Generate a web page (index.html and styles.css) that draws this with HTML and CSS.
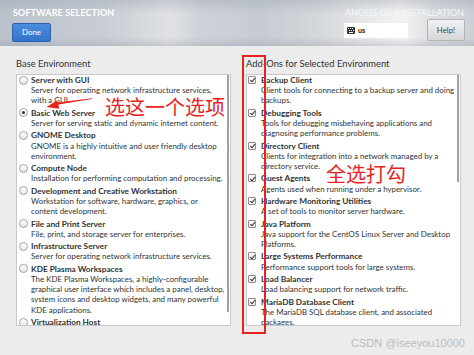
FILE: index.html
```html
<!DOCTYPE html>
<html lang="zh-CN">
<head>
    <meta charset="UTF-8">
    <title>Software Selection</title>
    <link rel="stylesheet" href="styles.css">
</head>
<body>
<div class="screen">
    <header class="topbar">
        <div class="topbar__left">
            <div class="topbar__title">SOFTWARE SELECTION</div>
            <button class="btnDone">Done</button>
        </div>
        <div class="topbar__right">
            <div class="topbar__product">ANOLIS OS 8 INSTALLATION</div>
            <div class="topbar__controls">
                <div class="kbd">
                    <svg class="kbd__icon" width="8" height="7" viewBox="0 0 8 7"><rect width="8" height="7" rx="1" fill="#2e3436"/><g fill="#fff"><rect x="1" y="1" width="1" height="1"/><rect x="3" y="1" width="1" height="1"/><rect x="5" y="1" width="1" height="1"/><rect x="2" y="3" width="1" height="1"/><rect x="4" y="3" width="1" height="1"/><rect x="6" y="3" width="1" height="1"/><rect x="2" y="5" width="4" height="1"/></g></svg>
                    <b>us</b>
                </div>
                <button class="btnHelp">Help!</button>
            </div>
        </div>
    </header>

    <main class="spoke">
        <section class="pane">
            <h3 class="pane__label">Base Environment</h3>
            <div class="listbox">
                <ul class="opts">
                    <li class="opt"><span class="radio"></span><b class="opt__name">Server with GUI</b><span class="opt__desc">Server for operating network infrastructure services,<br>with a GUI.</span></li>
                    <li class="opt"><span class="radio checked"></span><b class="opt__name">Basic Web Server</b><span class="opt__desc">Server for serving static and dynamic internet content.</span></li>
                    <li class="opt"><span class="radio"></span><b class="opt__name">GNOME Desktop</b><span class="opt__desc">GNOME is a highly intuitive and user friendly desktop<br>environment.</span></li>
                    <li class="opt"><span class="radio"></span><b class="opt__name">Compute Node</b><span class="opt__desc">Installation for performing computation and processing.</span></li>
                    <li class="opt"><span class="radio"></span><b class="opt__name">Development and Creative Workstation</b><span class="opt__desc">Workstation for software, hardware, graphics, or<br>content development.</span></li>
                    <li class="opt"><span class="radio"></span><b class="opt__name">File and Print Server</b><span class="opt__desc">File, print, and storage server for enterprises.</span></li>
                    <li class="opt"><span class="radio"></span><b class="opt__name">Infrastructure Server</b><span class="opt__desc">Server for operating network infrastructure services.</span></li>
                    <li class="opt"><span class="radio"></span><b class="opt__name">KDE Plasma Workspaces</b><span class="opt__desc">The KDE Plasma Workspaces, a highly-configurable<br>graphical user interface which includes a panel, desktop,<br>system icons and desktop widgets, and many powerful<br>KDE applications.</span></li>
                    <li class="opt"><span class="radio"></span><b class="opt__name">Virtualization Host</b><span class="opt__desc">Minimal virtualization host.</span></li>
                </ul>
                <div class="scrollInd scrollInd--left"></div>
            </div>
        </section>

        <section class="pane">
            <h3 class="pane__label">Add-Ons for Selected Environment</h3>
            <div class="listbox">
                <ul class="opts opts--check">
                    <li class="opt"><span class="check"></span><b class="opt__name">Backup Client</b><span class="opt__desc">Client tools for connecting to a backup server and doing<br>backups.</span></li>
                    <li class="opt"><span class="check"></span><b class="opt__name">Debugging Tools</b><span class="opt__desc">Tools for debugging misbehaving applications and<br>diagnosing performance problems.</span></li>
                    <li class="opt"><span class="check"></span><b class="opt__name">Directory Client</b><span class="opt__desc">Clients for integration into a network managed by a<br>directory service.</span></li>
                    <li class="opt"><span class="check"></span><b class="opt__name">Guest Agents</b><span class="opt__desc">Agents used when running under a hypervisor.</span></li>
                    <li class="opt"><span class="check"></span><b class="opt__name">Hardware Monitoring Utilities</b><span class="opt__desc">A set of tools to monitor server hardware.</span></li>
                    <li class="opt"><span class="check"></span><b class="opt__name">Java Platform</b><span class="opt__desc">Java support for the CentOS Linux Server and Desktop<br>Platforms.</span></li>
                    <li class="opt"><span class="check"></span><b class="opt__name">Large Systems Performance</b><span class="opt__desc">Performance support tools for large systems.</span></li>
                    <li class="opt"><span class="check"></span><b class="opt__name">Load Balancer</b><span class="opt__desc">Load balancing support for network traffic.</span></li>
                    <li class="opt"><span class="check"></span><b class="opt__name">MariaDB Database Client</b><span class="opt__desc">The MariaDB SQL database client, and associated<br>packages.</span></li>
                    <li class="opt"><span class="check"></span><b class="opt__name">Network File System Client</b><span class="opt__desc">Enables the system to attach to network storage.</span></li>
                </ul>
                <div class="scrollInd scrollInd--right"></div>
            </div>
        </section>
    </main>

    <!-- annotations drawn over the screenshot -->
    <div class="markBox"></div>
    <svg class="arrow" width="60" height="25" viewBox="0 0 60 25"><polygon points="6.5,17 17.5,10.2 17.5,12.4 52,8.2 52,9 18.5,14.6 19,18.8" fill="#e8231f"/></svg>
    <div class="note note--pick">选这一个选项</div>
    <div class="note note--all">全选打勾</div>
    <div class="watermark">CSDN @iseeyou10000</div>
</div>
</body>
</html>
```

FILE: styles.css
```css
:root {--bg: #ececec;--text: #2e3436;--border: #c9c9c9;--red: #e8231f;--line: 10.2px;}
* {box-sizing: border-box;}
body {margin: 0;padding: 0;background: var(--bg);font-family: Lato, 'Liberation Sans', sans-serif;color: var(--text);}
.screen {position: relative;width: 474px;height: 355px;overflow: hidden;background: var(--bg);}

.topbar {height: 46px;display: flex;justify-content: space-between;padding: 7px 9px 0 12px;
    background: linear-gradient(180deg, rgba(150,158,170,.35) 0%, rgba(255,255,255,0) 30%, rgba(255,255,255,0) 82%, rgba(140,148,160,.3) 100%),
    linear-gradient(90deg, #bcc2cb 0%, #c8cdd4 22%, #dfe1e4 36%, #ced2d8 42%, #c6cbd2 55%, #d5d8dc 68%, #e6e7e9 77%, #f3f3f3 85%, #dcdfe2 91%, #ccd0d6 100%);}
.topbar__title {color: #fff;font-size: 8.9px;font-weight: bold;line-height: 12px;letter-spacing: .2px;padding-left: 1px;}
.btnDone {margin-top: 1px;width: 39px;height: 19px;padding: 0;border: 1px solid #2c62ad;border-radius: 2px;background: linear-gradient(#4a8ee0, #3474c9);color: #fff;font-family: inherit;font-size: 7.8px;}
.topbar__right {display: flex;flex-direction: column;align-items: flex-end;}
.topbar__product {color: #f5f6f8;font-size: 8.8px;line-height: 12px;letter-spacing: .15px;margin-right: 1px;}
.topbar__controls {display: flex;align-items: center;gap: 19px;}
.kbd {width: 64px;height: 15px;background: #fff;display: flex;align-items: center;gap: 3px;padding-left: 3px;font-size: 7px;color: #111;}
.kbd__icon {display: block;}
.btnHelp {width: 38px;height: 22px;padding: 0;border: 1px solid #b4b4b4;border-radius: 2px;background: linear-gradient(#f2f2f2, #d6d6d6);color: #444;font-family: inherit;font-size: 7.8px;}

.spoke {display: grid;grid-template-columns: 215px 215px;column-gap: 15px;padding: 12px 13px 0 16px;}
.pane__label {margin: 0 0 5px;font-size: 9.4px;line-height: 11px;font-weight: normal;color: var(--text);}
.listbox {position: relative;height: 252px;background: #fff;border: 1px solid var(--border);overflow: hidden;}
.opts {list-style: none;margin: 0;padding: 0;}
.opt {display: grid;grid-template-columns: 14px 1fr;margin-bottom: 2.2px;line-height: var(--line);white-space: nowrap;}
.opt__name {grid-column: 2;font-size: 8.25px;}
.opt__desc {grid-column: 2;font-size: 7.9px;}
.radio {grid-row: 1;align-self: center;margin-left: 2px;width: 9px;height: 9px;border-radius: 50%;border: 1px solid #a3a3a3;background: linear-gradient(#fff, #e6e6e6);position: relative;}
.radio.checked::after {content: '';position: absolute;left: 2px;top: 2px;width: 3px;height: 3px;border-radius: 50%;background: var(--text);}
.check {grid-row: 1;align-self: center;margin-left: 1px;width: 8px;height: 8px;border: 1px solid #8f8f8f;border-radius: 1px;background: linear-gradient(#fff, #ececec);position: relative;}
.check::after {content: '';position: absolute;left: 1.6px;top: .2px;width: 2.2px;height: 4.2px;border: solid var(--text);border-width: 0 1.4px 1.4px 0;transform: rotate(40deg);}
.scrollInd {position: absolute;top: 0;right: 1px;width: 2px;background: #a2a2a2;}
.scrollInd--left {height: 237px;}
.scrollInd--right {height: 107px;}

.markBox {position: absolute;left: 242px;top: 55px;width: 24px;height: 279px;border: 2px solid var(--red);}
.arrow {position: absolute;left: 40px;top: 90px;}
.note {position: absolute;font-family: 'Noto Sans CJK SC', sans-serif;font-size: 20px;line-height: 20px;color: var(--red);}
.note--pick {left: 105px;top: 97px;}
.note--all {left: 326px;top: 164px;}
.watermark {position: absolute;right: 9px;top: 336px;font-family: 'Liberation Sans', sans-serif;font-size: 11px;line-height: 14px;color: #bcbcbc;}
```
